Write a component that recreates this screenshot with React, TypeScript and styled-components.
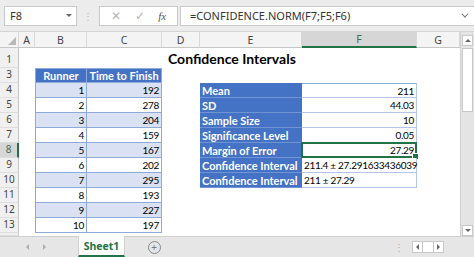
import React from "react";
import styled, { createGlobalStyle, css } from "styled-components";

const Global = createGlobalStyle`
  html, body { margin: 0; padding: 0; background: #ffffff; }
  body { font-family: "Lato", "Liberation Sans", sans-serif; }
`;

const Frame = styled.div`
  width: 474px;
  height: 257px;
  overflow: hidden;
  display: flex;
  flex-direction: column;
  background: #ffffff;
`;

/* ---------- formula bar ---------- */
const FormulaBar = styled.div`
  height: 32px;
  flex: none;
  display: flex;
  align-items: center;
  padding: 0 0 0 4px;
  box-sizing: border-box;
  background: #ececec;
  border-bottom: 1px solid #d4d4d4;
  font-family: "Noto Sans", "Liberation Sans", sans-serif;
  font-size: 11px;
  color: #333;
`;

const NameBox = styled.div`
  width: 73px;
  height: 20px;
  box-sizing: border-box;
  background: #fff;
  border: 1px solid #c8c8c8;
  display: flex;
  align-items: center;
  justify-content: space-between;
  padding: 0 4px 0 5px;
`;

const Caret = styled.span`
  width: 0;
  height: 0;
  border-left: 3px solid transparent;
  border-right: 3px solid transparent;
  border-top: 3px solid #666;
`;

const Grip = styled.div`
  width: 22px;
  display: flex;
  justify-content: center;
  color: #b0b0b0;
  font-size: 10px;
`;

const FnButtons = styled.div`
  width: 79px;
  height: 20px;
  box-sizing: border-box;
  background: #fff;
  border: 1px solid #c8c8c8;
  display: flex;
  align-items: center;
  justify-content: space-around;
  padding: 0 4px;
  color: #b4b4b4;
  font-size: 12px;
`;

const Fx = styled.span`
  font-family: "Liberation Serif", serif;
  font-style: italic;
  color: #555;
  font-size: 11px;
`;

const FormulaInput = styled.div`
  flex: 1;
  height: 20px;
  margin-left: 2px;
  box-sizing: border-box;
  background: #fff;
  border: 1px solid #c8c8c8;
  border-right: none;
  display: flex;
  align-items: center;
  justify-content: space-between;
  padding: 0 8px 0 9px;
`;

const Chevron = styled.span`
  width: 4px;
  height: 4px;
  border-right: 1.3px solid #666;
  border-bottom: 1.3px solid #666;
  transform: rotate(45deg) translateY(-2px);
`;

/* ---------- sheet ---------- */
const Body = styled.div`
  flex: 1;
  display: flex;
  min-height: 0;
`;

const Grid = styled.div`
  width: 460px;
  flex: none;
  display: grid;
  grid-template-columns: 19px 16px 52px 75px 38px 102px 115px 43px;
  grid-template-rows: 16px 20px repeat(11, 15px) 1fr;
  overflow: hidden;
  font-size: 11px;
  color: #000;
`;

const ColHead = styled.div<{ $sel?: boolean }>`
  box-sizing: border-box;
  background: ${(p) => (p.$sel ? "#d6d6d6" : "#f4f4f4")};
  border-right: 1px solid #d8d8d8;
  border-bottom: ${(p) => (p.$sel ? "2px solid #217346" : "1px solid #c6c6c6")};
  color: ${(p) => (p.$sel ? "#3c6e50" : "#444")};
  display: flex;
  align-items: center;
  justify-content: center;
  font-family: "Noto Sans", "Liberation Sans", sans-serif;
  font-size: 10.5px;
`;

const Corner = styled(ColHead)`
  justify-content: flex-end;
  align-items: flex-end;
  padding: 0 2px 2px 0;
`;

const RowHead = styled.div<{ $sel?: boolean }>`
  box-sizing: border-box;
  background: ${(p) => (p.$sel ? "#d6d6d6" : "#f0f0f0")};
  border-right: ${(p) => (p.$sel ? "2px solid #217346" : "1px solid #c6c6c6")};
  border-bottom: 1px solid #dedede;
  color: ${(p) => (p.$sel ? "#3c6e50" : "#444")};
  display: flex;
  align-items: flex-end;
  justify-content: center;
  padding-bottom: 1px;
  font-family: "Noto Sans", "Liberation Sans", sans-serif;
  font-size: 10px;
`;

type Kind = "blank" | "th" | "band" | "row" | "label" | "value";

const tableBorder = "#8eaadb";

const Cell = styled.div<{
  $kind: Kind;
  $align?: "left" | "right" | "center";
  $top?: boolean;
  $left?: boolean;
}>`
  position: relative;
  box-sizing: border-box;
  display: flex;
  align-items: center;
  white-space: nowrap;
  overflow: visible;
  padding: 0 2px;
  font-size: 10px;
  letter-spacing: -0.3px;
  justify-content: ${(p) =>
    p.$align === "right" ? "flex-end" : p.$align === "center" ? "center" : "flex-start"};
  ${(p) =>
    (p.$kind === "th" || p.$kind === "label") &&
    css`
      background: #4472c4;
      color: #fff;
      font-weight: 700;
      font-size: 11px;
      letter-spacing: 0;
    `}
  ${(p) =>
    p.$kind === "label" &&
    css`
      border-bottom: 1px solid #6f93d3;
    `}
  ${(p) =>
    p.$kind === "band" &&
    css`
      background: #d9e1f2;
    `}
  ${(p) =>
    (p.$kind === "band" || p.$kind === "row" || p.$kind === "th") &&
    css`
      border-bottom: 1px solid ${tableBorder};
      border-right: 1px solid ${tableBorder};
    `}
  ${(p) =>
    p.$kind === "value" &&
    css`
      background: #fff;
      border-bottom: 1px solid #b4c6e7;
      border-right: 1px solid #b4c6e7;
    `}
  ${(p) => p.$top && css`border-top: 1px solid ${tableBorder};`}
  ${(p) => p.$left && css`border-left: 1px solid ${tableBorder};`}
`;

const Title = styled.span`
  font-weight: 700;
  font-size: 14px;
  letter-spacing: 0;
  position: relative;
  left: 4px;
`;

const Selection = styled.div`
  position: absolute;
  inset: -1px;
  border: 2px solid #217346;
  pointer-events: none;
`;

const Handle = styled.div`
  position: absolute;
  right: -4px;
  bottom: -4px;
  width: 5px;
  height: 5px;
  background: #217346;
  border: 1px solid #fff;
`;

/* ---------- scrollbars ---------- */
const VScroll = styled.div`
  flex: 1;
  display: flex;
  flex-direction: column;
  background: #e4e4e4;
  border-left: 1px solid #d0d0d0;
  padding: 3px 1px 0 1px;
  gap: 2px;
`;

const ArrowBtn = styled.div`
  height: 9px;
  flex: none;
  background: #fff;
  border: 1px solid #c8c8c8;
  display: flex;
  align-items: center;
  justify-content: center;
`;

const Tri = styled.span<{ $dir: "up" | "down" | "left" | "right" }>`
  width: 0;
  height: 0;
  ${(p) =>
    p.$dir === "up" &&
    css`
      border-left: 3px solid transparent;
      border-right: 3px solid transparent;
      border-bottom: 3px solid #666;
    `}
  ${(p) =>
    p.$dir === "down" &&
    css`
      border-left: 3px solid transparent;
      border-right: 3px solid transparent;
      border-top: 3px solid #666;
    `}
  ${(p) =>
    p.$dir === "left" &&
    css`
      border-top: 3px solid transparent;
      border-bottom: 3px solid transparent;
      border-right: 3px solid #666;
    `}
  ${(p) =>
    p.$dir === "right" &&
    css`
      border-top: 3px solid transparent;
      border-bottom: 3px solid transparent;
      border-left: 3px solid #666;
    `}
`;

const Thumb = styled.div`
  height: 62px;
  flex: none;
  background: #fff;
  border: 1px solid #c8c8c8;
`;

const Track = styled.div`
  flex: 1;
`;

/* ---------- bottom tabs ---------- */
const TabBar = styled.div`
  height: 20px;
  flex: none;
  display: flex;
  align-items: stretch;
  background: #e6e6e6;
  border-top: 1px solid #cfcfcf;
  font-family: "Noto Sans", "Liberation Sans", sans-serif;
`;

const Nav = styled.div`
  width: 72px;
  display: flex;
  align-items: center;
  justify-content: center;
  gap: 14px;
  opacity: 0.45;
  padding-right: 6px;
`;

const SheetTab = styled.div`
  width: 47px;
  background: #fff;
  box-sizing: border-box;
  border-bottom: 2px solid #217346;
  border-left: 1px solid #cfcfcf;
  border-right: 1px solid #cfcfcf;
  margin-top: -1px;
  display: flex;
  align-items: center;
  justify-content: center;
  color: #217346;
  font-weight: 700;
  font-size: 10.5px;
`;

const AddSheet = styled.div`
  width: 58px;
  display: flex;
  align-items: center;
  justify-content: center;
`;

const Plus = styled.div`
  width: 11px;
  height: 11px;
  border: 1px solid #888;
  border-radius: 50%;
  display: flex;
  align-items: center;
  justify-content: center;
  color: #777;
  font-size: 10px;
  line-height: 1;
`;

const Spacer = styled.div`
  flex: 1;
`;

const HNav = styled.div`
  display: flex;
  align-items: center;
  gap: 8px;
  padding-right: 16px;
  color: #aaa;
  font-size: 10px;
`;

const HBtns = styled.div`
  display: flex;
  align-items: center;
  height: 10px;
  background: #fff;
  border: 1px solid #c8c8c8;
`;

const HBtn = styled.div<{ $mid?: boolean }>`
  width: ${(p) => (p.$mid ? "10px" : "9px")};
  height: 100%;
  display: flex;
  align-items: center;
  justify-content: center;
  border-left: ${(p) => (p.$mid ? "1px solid #c8c8c8" : "none")};
  border-right: ${(p) => (p.$mid ? "1px solid #c8c8c8" : "none")};
`;

const CornerBox = styled.div`
  width: 14px;
  background: #e6e6e6;
`;

const runners = [
  [1, 192],
  [2, 278],
  [3, 204],
  [4, 159],
  [5, 167],
  [6, 202],
  [7, 295],
  [8, 193],
  [9, 227],
  [10, 197],
];

const stats: [string, string, "left" | "right"][] = [
  ["Mean", "211", "right"],
  ["SD", "44.03", "right"],
  ["Sample Size", "10", "right"],
  ["Significance Level", "0.05", "right"],
  ["Margin of Error", "27.29", "right"],
  ["Confidence Interval", "211.4 ± 27.291633436039", "left"],
  ["Confidence Interval", "211 ± 27.29", "left"],
];

const cols = ["A", "B", "C", "D", "E", "F", "G"];

export default function App() {
  const rowNums = [1, 3, 4, 5, 6, 7, 8, 9, 10, 11, 12, 13, 14];

  const renderRow = (r: number) => {
    const cells: React.ReactNode[] = [];
    cells.push(
      <RowHead key={`h${r}`} $sel={r === 8}>
        {r <= 13 ? r : ""}
      </RowHead>
    );
    cells.push(<Cell key={`a${r}`} $kind="blank" />);
    if (r === 3) {
      cells.push(
        <Cell key={`b${r}`} $kind="th" $align="center" $top $left>
          Runner
        </Cell>,
        <Cell key={`c${r}`} $kind="th" $align="center" $top>
          Time to Finish
        </Cell>
      );
    } else if (r >= 4 && r <= 13) {
      const [n, t] = runners[r - 4];
      const kind: Kind = r % 2 === 0 ? "band" : "row";
      cells.push(
        <Cell key={`b${r}`} $kind={kind} $align="right" $left>
          {n}
        </Cell>,
        <Cell key={`c${r}`} $kind={kind} $align="right">
          {t}
        </Cell>
      );
    } else {
      cells.push(<Cell key={`b${r}`} $kind="blank" />, <Cell key={`c${r}`} $kind="blank" />);
    }
    if (r === 1) {
      cells.push(
        <Cell key={`d${r}`} $kind="blank">
          <Title>Confidence Intervals</Title>
        </Cell>
      );
    } else {
      cells.push(<Cell key={`d${r}`} $kind="blank" />);
    }
    if (r >= 4 && r <= 10) {
      const [label, value, align] = stats[r - 4];
      cells.push(
        <Cell key={`e${r}`} $kind="label">
          {label}
        </Cell>,
        <Cell key={`f${r}`} $kind="value" $align={align} $top={r === 4}>
          {value}
          {r === 8 && (
            <Selection>
              <Handle />
            </Selection>
          )}
        </Cell>
      );
    } else {
      cells.push(<Cell key={`e${r}`} $kind="blank" />, <Cell key={`f${r}`} $kind="blank" />);
    }
    cells.push(<Cell key={`g${r}`} $kind="blank" />);
    return cells;
  };

  return (
    <Frame>
      <Global />
      <FormulaBar>
        <NameBox>
          <span>F8</span>
          <Caret />
        </NameBox>
        <Grip>⋮</Grip>
        <FnButtons>
          <span>✕</span>
          <span>✓</span>
          <Fx>fx</Fx>
        </FnButtons>
        <FormulaInput>
          <span>=CONFIDENCE.NORM(F7;F5;F6)</span>
          <Chevron />
        </FormulaInput>
      </FormulaBar>
      <Body>
        <Grid>
          <Corner>
            <svg width="8" height="8" viewBox="0 0 8 8">
              <polygon points="8,0 8,8 0,8" fill="#b8b8b8" />
            </svg>
          </Corner>
          {cols.map((c) => (
            <ColHead key={c} $sel={c === "F"}>
              {c}
            </ColHead>
          ))}
          {rowNums.map((r) => renderRow(r))}
        </Grid>
        <VScroll>
          <ArrowBtn>
            <Tri $dir="up" />
          </ArrowBtn>
          <Thumb />
          <Track />
          <ArrowBtn>
            <Tri $dir="down" />
          </ArrowBtn>
        </VScroll>
      </Body>
      <TabBar>
        <Nav>
          <Tri $dir="left" />
          <Tri $dir="right" />
        </Nav>
        <SheetTab>Sheet1</SheetTab>
        <AddSheet>
          <Plus>+</Plus>
        </AddSheet>
        <Spacer />
        <HNav>
          <span>⋮</span>
          <HBtns>
            <HBtn>
              <Tri $dir="left" />
            </HBtn>
            <HBtn $mid />
            <HBtn>
              <Tri $dir="right" />
            </HBtn>
          </HBtns>
        </HNav>
        <CornerBox />
      </TabBar>
    </Frame>
  );
}
